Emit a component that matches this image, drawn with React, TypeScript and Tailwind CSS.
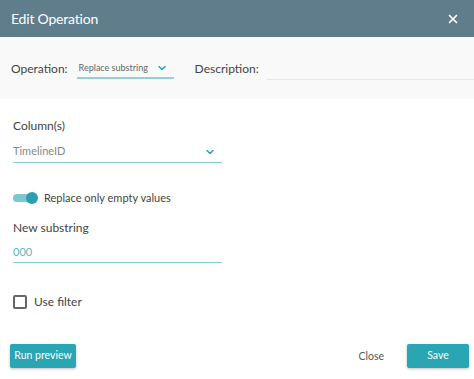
import { ChevronDown, X } from "lucide-react";

const font = { fontFamily: "Lato, 'Open Sans', sans-serif" };

export default function App() {
  return (
    <div className="w-[474px] h-[379px] bg-white flex flex-col text-[#444]" style={font}>
      {/* header */}
      <div className="h-[37px] bg-[#5f7d8b] flex items-center justify-between pl-[11px] pr-[14px] shrink-0">
        <span className="text-white text-[14px] tracking-[-0.2px]">Edit Operation</span>
        <X className="w-[14px] h-[14px] text-white" strokeWidth={3} />
      </div>

      {/* operation row */}
      <div className="h-[62px] bg-[#f9f9f9] flex items-center pl-[11px] pt-[2px] shrink-0">
        <span className="text-[12px]">Operation:</span>
        <div className="ml-[9px] w-[97px] h-[20px] flex items-center justify-between border-b-2 border-[#8ed2d6] pl-[2px] pr-[6px]">
          <span className="text-[9px] text-[#666]">Replace substring</span>
          <ChevronDown className="w-[12px] h-[12px] text-[#2aa5b3]" strokeWidth={3} />
        </div>
        <span className="ml-[21px] text-[12px]">Description:</span>
        <div className="ml-[8px] flex-1 h-[22px] border-b border-[#e6e6e6]" />
      </div>

      {/* body */}
      <div className="flex-1 flex flex-col px-[13px] pt-[18px]">
        <span className="text-[12px] leading-[18px]">Column(s)</span>
        <div className="mt-[6px] w-[209px] h-[22px] flex items-center justify-between border-b border-[#7fcdd2] pr-[6px]">
          <span className="text-[11px] text-[#888]">TimelineID</span>
          <ChevronDown className="w-[12px] h-[12px] text-[#2aa5b3]" strokeWidth={3} />
        </div>

        <div className="mt-[27px] flex items-center">
          <div className="relative w-[25px] h-[12px] flex items-center">
            <div className="w-[24px] h-[8px] rounded-full bg-[#7fc7cd]" />
            <div className="absolute right-0 w-[12px] h-[12px] rounded-full bg-[#2aa0ae]" />
          </div>
          <span className="ml-[6px] text-[11px]">Replace only empty values</span>
        </div>

        <span className="mt-[12px] text-[12px] leading-[18px]">New substring</span>
        <div className="mt-[6px] w-[209px] h-[20px] flex items-center border-b border-[#7fcdd2]">
          <span className="text-[11px] text-[#5db6bf]">000</span>
        </div>

        <div className="mt-[30px] flex items-center">
          <div className="w-[14px] h-[14px] border-2 border-[#666] rounded-[2px]" />
          <span className="ml-[7px] text-[12px]">Use filter</span>
        </div>
      </div>

      {/* footer */}
      <div className="h-[35px] shrink-0 flex items-start pl-[10px] pr-[5px]">
        <button className="h-[24px] w-[66px] rounded-[2px] bg-[#2aa5b3] text-white text-[10.5px] shadow-[0_1px_3px_rgba(0,0,0,0.25)]">
          Run preview
        </button>
        <span className="ml-auto mr-[23px] mt-[5px] text-[10.5px] text-[#555]">Close</span>
        <button className="h-[24px] w-[62px] rounded-[2px] bg-[#2aa5b3] text-white text-[10.5px] shadow-[0_1px_3px_rgba(0,0,0,0.25)]">
          Save
        </button>
      </div>
    </div>
  );
}
